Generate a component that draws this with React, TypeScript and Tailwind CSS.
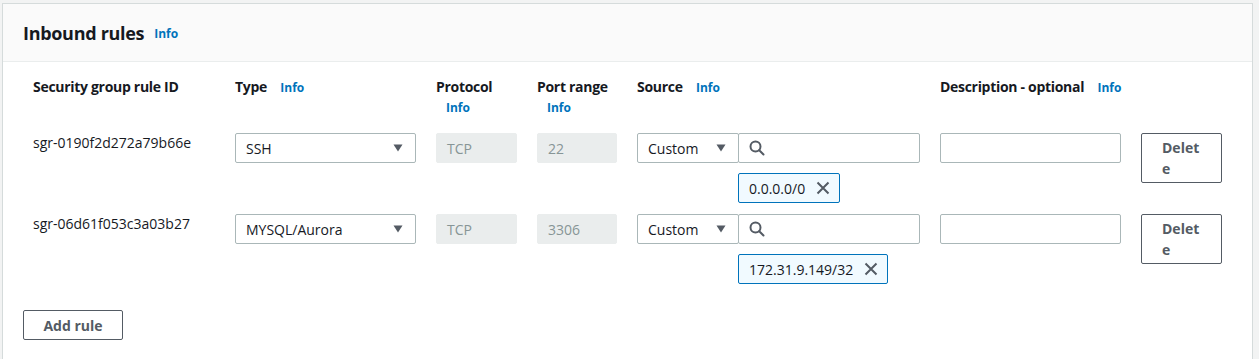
import React from "react";

const font = { fontFamily: '"Open Sans", "Noto Sans", Arial, sans-serif' };

function Info({ className = "" }: { className?: string }) {
  return (
    <span className={"inline-block text-[12px] font-bold tracking-normal text-[#0073bb] leading-[20px] " + className}>
      Info
    </span>
  );
}

function Caret() {
  return (
    <svg width="10" height="8" viewBox="0 0 10 8" className="shrink-0">
      <path d="M0.5 0.5 H9.5 L5 7.5 Z" fill="#545b64" />
    </svg>
  );
}

function Select({ value, className = "" }: { value: string; className?: string }) {
  return (
    <div
      className={
        "h-[30px] border border-[#aab7b8] rounded-[2px] bg-white flex items-center justify-between pl-[10px] pr-[12px] text-[14px] text-[#16191f] " +
        className
      }
    >
      <span>{value}</span>
      <Caret />
    </div>
  );
}

function Disabled({ value }: { value: string }) {
  return (
    <div className="h-[30px] rounded-[2px] bg-[#eaeded] border border-[#eaeded] flex items-center pl-[10px] text-[14px] text-[#879596]">
      {value}
    </div>
  );
}

function SearchIcon() {
  return (
    <svg width="16" height="16" viewBox="0 0 16 16" fill="none">
      <circle cx="6.5" cy="6.5" r="5" stroke="#545b64" strokeWidth="2" />
      <path d="M10.2 10.2 L14.5 14.5" stroke="#545b64" strokeWidth="2" strokeLinecap="round" />
    </svg>
  );
}

function XIcon() {
  return (
    <svg width="14" height="14" viewBox="0 0 14 14" fill="none">
      <path d="M1.5 1.5 L12.5 12.5 M12.5 1.5 L1.5 12.5" stroke="#545b64" strokeWidth="2" />
    </svg>
  );
}

function Row({ id, type, port, cidr }: { id: string; type: string; port: string; cidr: string }) {
  return (
    <>
      <div className="text-[14px] text-[#16191f] leading-[20px]">{id}</div>
      <Select value={type} />
      <Disabled value="TCP" />
      <Disabled value={port} />
      <div className="flex flex-col gap-[10px]">
        <div className="flex">
          <Select value="Custom" className="w-[102px]" />
          <div className="-ml-px flex-1 h-[30px] border border-[#aab7b8] rounded-[2px] bg-white flex items-center pl-[10px]">
            <SearchIcon />
          </div>
        </div>
        <div className="flex">
          <div className="ml-[101px] h-[30px] border border-[#0073bb] rounded-[2px] bg-[#f1faff] flex items-center pl-[10px] pr-[9px] gap-[11px] text-[14px] text-[#16191f]">
            <span>{cidr}</span>
            <XIcon />
          </div>
        </div>
      </div>
      <div className="h-[30px] border border-[#aab7b8] rounded-[2px] bg-white" />
      <div>
        <button className="w-[81px] border border-[#545b64] rounded-[2px] bg-white text-left pl-[20px] pr-[19px] py-[3px] text-[14px] font-bold text-[#545b64] leading-[21px] break-all">
          Delete
        </button>
      </div>
    </>
  );
}

const cols = "pl-[10px] grid grid-cols-[182px_181px_81px_80px_283px_181px_81px] gap-x-[20px]";
const head = "text-[14px] font-bold text-[#16191f] leading-[20px] tracking-[-0.3px]";

export default function App() {
  return (
    <div className="h-[359px] overflow-hidden bg-[#f2f3f3] pt-[3px] pl-[2px] pr-[6px]" style={font}>
      <div className="bg-white border border-[#d5dbdb] min-h-[420px]">
        <div className="h-[58px] bg-[#fafafa] border-b border-[#eaeded] flex items-center pl-[20px]">
          <h2 className="text-[18px] font-bold text-[#16191f] leading-[22px] tracking-[-0.3px]">Inbound rules</h2>
          <Info className="ml-[10px] mt-[2px]" />
        </div>
        <div className="pt-[15px] px-[20px]">
          <div className={cols + " items-start"}>
            <div className={head}>Security group rule ID</div>
            <div className={head}>
              Type <Info className="ml-[10px]" />
            </div>
            <div className={head}>
              Protocol <Info className="ml-[10px]" />
            </div>
            <div className={head}>
              Port range <Info className="ml-[10px]" />
            </div>
            <div className={head}>
              Source <Info className="ml-[10px]" />
            </div>
            <div className={head + " whitespace-nowrap"}>
              Description - optional <Info className="ml-[10px]" />
            </div>
            <div />
          </div>
          <div className={cols + " gap-y-[11px] items-start mt-[15px]"}>
            <Row id="sgr-0190f2d272a79b66e" type="SSH" port="22" cidr="0.0.0.0/0" />
            <Row id="sgr-06d61f053c3a03b27" type="MYSQL/Aurora" port="3306" cidr="172.31.9.149/32" />
          </div>
          <div className="mt-[26px]">
            <button className="w-[100px] h-[30px] border border-[#545b64] rounded-[2px] bg-white text-[14px] font-bold text-[#545b64]">
              Add rule
            </button>
          </div>
        </div>
      </div>
    </div>
  );
}
